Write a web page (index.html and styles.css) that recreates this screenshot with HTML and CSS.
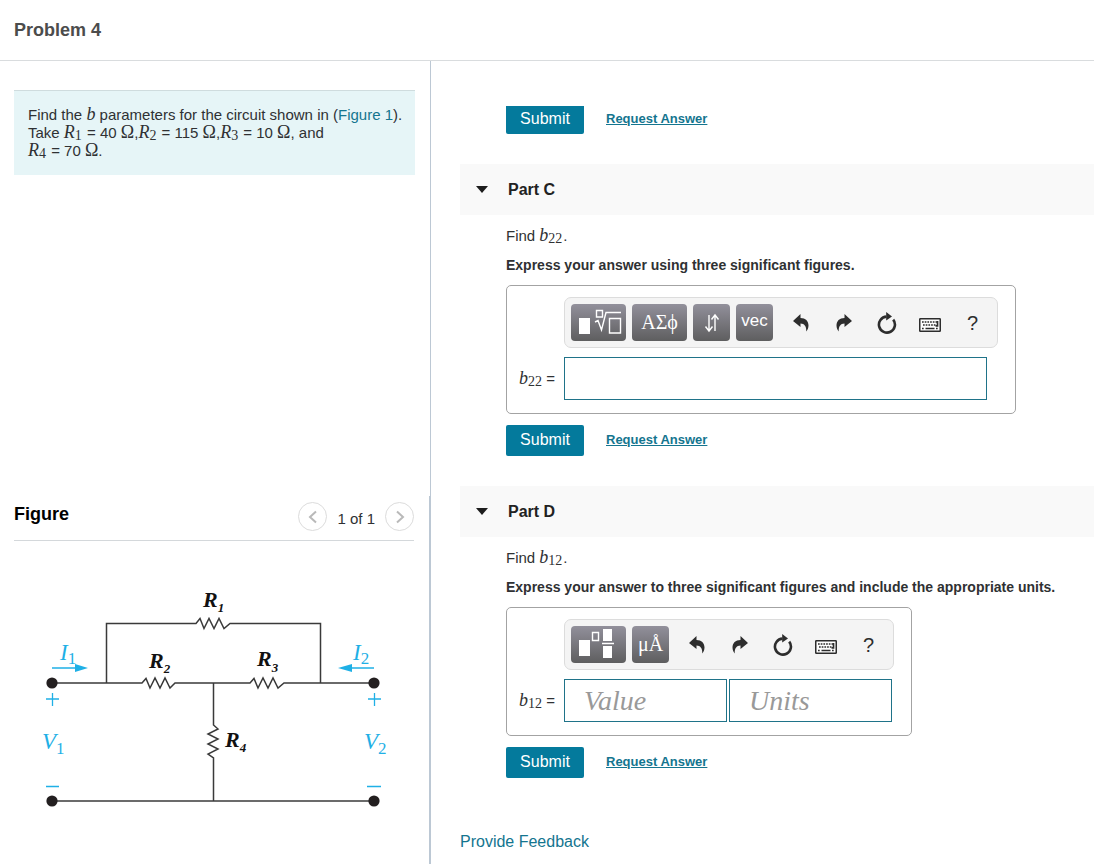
FILE: index.html
```html
<!DOCTYPE html>
<html lang="en">
<head>
<meta charset="utf-8">
<title>Problem 4</title>
<link rel="stylesheet" href="styles.css">
</head>
<body>
<svg class="sprite" aria-hidden="true">
  <symbol id="undo" viewBox="0 0 16 18"><path d="M0 7 7.500 0V4C12.500 4 15.500 7 15.500 11.500 15.500 14 14.500 16 13.200 17.600 13.600 12.500 11.500 9.800 7.500 9.600V13Z"/></symbol>
  <symbol id="redo" viewBox="0 0 16 18"><path d="M16 7 8.500 0V4C3.500 4 .5 7 .5 11.500.5 14 1.500 16 2.800 17.600 2.400 12.500 4.500 9.800 8.500 9.600V13Z"/></symbol>
  <symbol id="reset" viewBox="0 0 20 22"><path d="M9.500 4.600A8 8 0 1 0 16.200 7.600" fill="none" stroke="currentColor" stroke-width="2.600"/><path d="M9.200 0 15 4.500 9.200 8.400Z"/></symbol>
  <symbol id="keyboard" viewBox="0 0 22 14"><rect x=".75" y=".75" width="20.500" height="12.500" rx=".6" fill="#fff" stroke="currentColor" stroke-width="1.500"/><path d="M3 4H19M4 7H17M3 10.500H5M17 10.500H19" fill="none" stroke="currentColor" stroke-width="1.700" stroke-dasharray="1.700 1"/><path d="M6.500 10.500H15.500M18.500 3V7.800H16.500" fill="none" stroke="currentColor" stroke-width="1.700"/></symbol>
</svg>

<header class="page-header"><h1>Problem 4</h1></header>

<main class="layout">
  <aside class="side">
    <div class="side-top">
      <p class="prompt">Find the <i class="m">b</i> parameters for the circuit shown in (<a href="#figure">Figure 1</a>). Take <span class="v"><i class="m">R</i><sub>1</sub></span> = 40 <span class="m">Ω</span>,<span class="v"><i class="m">R</i><sub>2</sub></span> = 115 <span class="m">Ω</span>,<span class="v"><i class="m">R</i><sub>3</sub></span> = 10 <span class="m">Ω</span>, and<br><span class="v"><i class="m">R</i><sub>4</sub></span> = 70 <span class="m">Ω</span>.</p>
    </div>
    <section class="figure" id="figure">
      <div class="figure-head">
        <h2>Figure</h2>
        <div class="pager">
          <button class="round" type="button" aria-label="Previous figure"><svg viewBox="0 0 10 14"><path d="M8 1.500 2 7 8 12.500"/></svg></button>
          <span>1 of 1</span>
          <button class="round" type="button" aria-label="Next figure"><svg viewBox="0 0 10 14"><path d="M2 1.500 8 7 2 12.500"/></svg></button>
        </div>
      </div>
      <svg class="circuit" viewBox="14 580 400 240" role="img" aria-label="Circuit with resistors R1 to R4">
        <g class="wire">
          <path d="M52 682H142L146 677.500 150 687 155 677 160 687 165 677 170 687 175 682H250L254 677.500 258 687 263 677 268 687 273 677 278 687 284 682H374"/>
          <path d="M106.500 682V622.500H196L200 617.500 204 627.500 209 617.500 214 627.500 219 617.500 224 627.500 230 622.500H320.500V682"/>
          <path d="M213.500 682V724L218 728 208 733 218 738 208 743 218 748 208 753 213.500 757V800"/>
          <path d="M52 800H374"/>
        </g>
        <g class="node"><circle cx="52" cy="682" r="5.600"/><circle cx="374" cy="682" r="5.600"/><circle cx="52" cy="800" r="5.600"/><circle cx="374" cy="800" r="5.600"/></g>
        <g class="blue-line"><path d="M52 667H76M374 667H350M46 698H59M52.500 692V705M368 698H381M374.500 692V705M46 785.500H59M367 785.500H381"/><path class="tip" d="M75 663 88 667 75 671ZM352 663 338 667 352 671Z"/></g>
        <g class="res">
          <text x="203" y="606">R<tspan class="s" dy="5">1</tspan></text>
          <text x="149" y="667">R<tspan class="s" dy="5">2</tspan></text>
          <text x="257" y="665">R<tspan class="s" dy="6">3</tspan></text>
          <text x="225" y="746">R<tspan class="s" dy="5">4</tspan></text>
        </g>
        <g class="port">
          <text x="60" y="659">I<tspan class="s" dy="4">1</tspan></text>
          <text x="353" y="659">I<tspan class="s" dy="4">2</tspan></text>
          <text x="42" y="748">V<tspan class="s" dy="5">1</tspan></text>
          <text x="364" y="748">V<tspan class="s" dy="5">2</tspan></text>
        </g>
      </svg>
    </section>
  </aside>

  <div class="parts">
    <div class="actions first">
      <button class="submit" type="button">Submit</button>
      <a href="#answer">Request Answer</a>
    </div>

    <section class="part">
      <h2 class="part-head"><svg viewBox="0 0 12 7"><path d="M0 0H12L6 7Z"/></svg>Part C</h2>
      <div class="part-body">
        <p>Find <span class="v"><i class="m">b</i><sub>22</sub></span>.</p>
        <p class="bold">Express your answer using three significant figures.</p>
        <div class="answer">
          <div class="toolbar">
            <button class="key wide" type="button" aria-label="Templates"><svg width="43" height="27" viewBox="0 0 43 27"><path class="fill" d="M2 9H13V25H2Z"/><path d="M19.500 1.500H25.500V8H19.500ZM18 13 21 11.500 24.500 21 29 3.500H44M32.500 9.500H43.500V24H32.500Z"/></svg></button>
            <button class="key wide greek" type="button">ΑΣϕ</button>
            <button class="key" type="button" aria-label="Arrows"><svg width="16" height="20" viewBox="0 0 16 20"><path d="M5 2V18M1.500 13.500 5 18 8.500 13.500M11 18V2M7.500 6.500 11 2 14.500 6.500"/></svg></button>
            <button class="key vec" type="button">vec</button>
            <div class="tools">
              <button type="button" aria-label="Undo"><svg width="16" height="18"><use href="#undo"/></svg></button>
              <button type="button" aria-label="Redo"><svg width="16" height="18"><use href="#redo"/></svg></button>
              <button type="button" aria-label="Reset"><svg width="20" height="22"><use href="#reset"/></svg></button>
              <button class="kb" type="button" aria-label="Keyboard"><svg width="22" height="14"><use href="#keyboard"/></svg></button>
              <button type="button" aria-label="Help">?</button>
            </div>
          </div>
          <label for="b22"><i class="m">b</i><sub>22</sub> =</label>
          <div class="fields single"><input id="b22" type="text"></div>
        </div>
        <div class="actions">
          <button class="submit" type="button">Submit</button>
          <a href="#answer">Request Answer</a>
        </div>
      </div>
    </section>

    <section class="part">
      <h2 class="part-head"><svg viewBox="0 0 12 7"><path d="M0 0H12L6 7Z"/></svg>Part D</h2>
      <div class="part-body">
        <p>Find <span class="v"><i class="m">b</i><sub>12</sub></span>.</p>
        <p class="bold">Express your answer to three significant figures and include the appropriate units.</p>
        <div class="answer">
          <div class="toolbar">
            <button class="key wide" type="button" aria-label="Templates"><svg width="43" height="31" viewBox="0 0 43 31"><path class="fill" d="M2 11H13V27H2ZM26 0H35V12H26ZM26 17H35V29H26Z"/><path d="M15.500 3.500H21.500V11.500H15.500ZM25 14.500H37"/></svg></button>
            <button class="key greek" type="button">μÅ</button>
            <div class="tools">
              <button type="button" aria-label="Undo"><svg width="16" height="18"><use href="#undo"/></svg></button>
              <button type="button" aria-label="Redo"><svg width="16" height="18"><use href="#redo"/></svg></button>
              <button type="button" aria-label="Reset"><svg width="20" height="22"><use href="#reset"/></svg></button>
              <button class="kb" type="button" aria-label="Keyboard"><svg width="22" height="14"><use href="#keyboard"/></svg></button>
              <button type="button" aria-label="Help">?</button>
            </div>
          </div>
          <label for="b12"><i class="m">b</i><sub>12</sub> =</label>
          <div class="fields"><input id="b12" type="text" placeholder="Value"><input type="text" placeholder="Units" aria-label="Units"></div>
        </div>
        <div class="actions">
          <button class="submit" type="button">Submit</button>
          <a href="#answer">Request Answer</a>
        </div>
      </div>
    </section>
    <a class="feedback" href="#feedback">Provide Feedback</a>
  </div>
</main>
</body>
</html>
```

FILE: styles.css
```css
* { box-sizing: border-box; }
body { margin: 0; min-height: 100vh; display: flex; flex-direction: column; background: #fff; color: #2f3133; font: 15px/18px "Liberation Sans", Arial, sans-serif; }
h1, h2, p { margin: 0; }
button { font: inherit; cursor: pointer; }
a { color: #14758f; text-decoration: none; }
svg { display: block; }
.sprite { position: absolute; width: 0; height: 0; }

.page-header { padding: 20px 14px; border-bottom: 1px solid #d9dcde; }
.page-header h1 { font-size: 18px; line-height: 20px; color: #4c4c4c; }

.layout { flex: 1; display: grid; grid-template-columns: 431px minmax(0, 1fr); }
.side { display: flex; flex-direction: column; }
.side-top { flex: 1; padding: 29px 15px 0 14px; border-right: 1px solid #bcc8d4; }
.prompt { padding: 15px 6px 15px 14px; background: #e6f5f7; border-top: 1px solid #cfdcde; }

.m { font-family: "Liberation Serif", "Times New Roman", serif; font-size: 18px; line-height: 0; }
sub { font-family: "Liberation Serif", "Times New Roman", serif; font-size: 14px; line-height: 0; vertical-align: -2px; }
.v { margin: 0 1px 0 0; white-space: nowrap; }

.figure { border-right: 2px solid #bcc8d4; padding: 0 15px 44px 14px; }
.figure-head { display: flex; justify-content: space-between; align-items: flex-start; height: 45px; padding-top: 6px; border-bottom: 1px solid #d4d8db; }
.figure-head h2 { font-size: 18px; line-height: 24px; color: #000; }
.pager { display: flex; align-items: center; gap: 10px; }
.pager span { padding-top: 4px; }
.round { width: 29px; height: 29px; padding: 0; display: grid; place-items: center; border: 1px solid #dcdcdc; border-radius: 50%; background: #fff; }
.round svg { width: 10px; height: 14px; fill: none; stroke: #b9b9b9; stroke-width: 2; }

.circuit { width: 100%; margin-top: 40px; font-family: "Liberation Serif", "Times New Roman", serif; }
.wire path { fill: none; stroke: #3a3a3a; stroke-width: 1.5; }
.node { fill: #231f20; }
.blue-line path { fill: none; stroke: #1fb0e6; stroke-width: 1.3; }
.blue-line .tip { fill: #1fb0e6; stroke: none; }
.res { fill: #111; font-size: 22px; font-weight: bold; font-style: italic; }
.res .s { font-size: 13px; }
.port { fill: #1fb0e6; font-size: 23px; font-style: italic; }
.port .s { font-size: 17px; font-style: normal; }

.parts { padding: 45px 0 14px 29px; display: flex; flex-direction: column; }
.actions { display: flex; align-items: center; gap: 22px; margin-top: 11px; }
.actions.first { margin: 0 0 0 46px; }
.actions a { padding-bottom: 2px; font-size: 13px; font-weight: bold; text-decoration: underline; }
.submit { width: 78px; height: 31px; padding: 0 0 2px; border: 0; border-radius: 2px; background: #047a9c; color: #fff; font-size: 16px; }
.first .submit { height: 28px; border-radius: 0 0 2px 2px; }

.part { margin-top: 30px; }
.part-head { display: flex; align-items: center; gap: 20px; height: 51px; padding-left: 16px; background: #f9f9f9; font-size: 16px; color: #222; }
.part-head svg { width: 12px; height: 7px; fill: #1d1d1d; }
.part-body { padding: 12px 0 0 46px; }
.bold { margin-top: 11px; font-size: 14px; font-weight: bold; }

.answer { display: grid; grid-template-columns: 45px auto; row-gap: 9px; width: fit-content; margin-top: 11px; padding: 11px 17px 13px 12px; border: 1px solid #a3a3a3; border-radius: 5px; }
.answer label { align-self: center; }
.toolbar { grid-column: 2; display: flex; align-items: center; gap: 6px; height: 51px; padding: 0 3px 0 6px; border: 1px solid #dcdcdc; border-radius: 7px; background: #f4f4f4; }
.key { width: 37px; height: 37px; padding: 0; display: grid; place-items: center; border: 0; border-radius: 4px; background: linear-gradient(#92909b, #5e5e5f); color: #fff; }
.key.wide { width: 55px; }
.key svg { fill: none; stroke: #fff; stroke-width: 1.4; overflow: visible; }
.key .fill { fill: #fff; stroke: none; }
.greek { font: 20px "Liberation Serif", "Times New Roman", serif; }
.vec { font-size: 17px; padding-bottom: 3px; }
.tools { display: flex; }
.tools button { width: 43px; height: 37px; padding: 0; display: grid; place-items: center; border: 0; background: none; color: #2d2d2d; font-size: 20px; }
.tools svg { fill: currentColor; }
.tools .kb { padding-top: 4px; }

.fields { display: flex; gap: 2px; margin-right: 2px; }
.fields.single { margin-right: 11px; }
.fields input { flex: 1; min-width: 0; width: 0; height: 43px; padding: 0 19px; border: 1px solid #1f7389; border-radius: 0; background: #fff; font: italic 28px "Liberation Serif", "Times New Roman", serif; color: #333; }
.fields input::placeholder { color: #999; opacity: 1; }
.feedback { margin-top: 55px; align-self: flex-start; font-size: 16px; }
```
